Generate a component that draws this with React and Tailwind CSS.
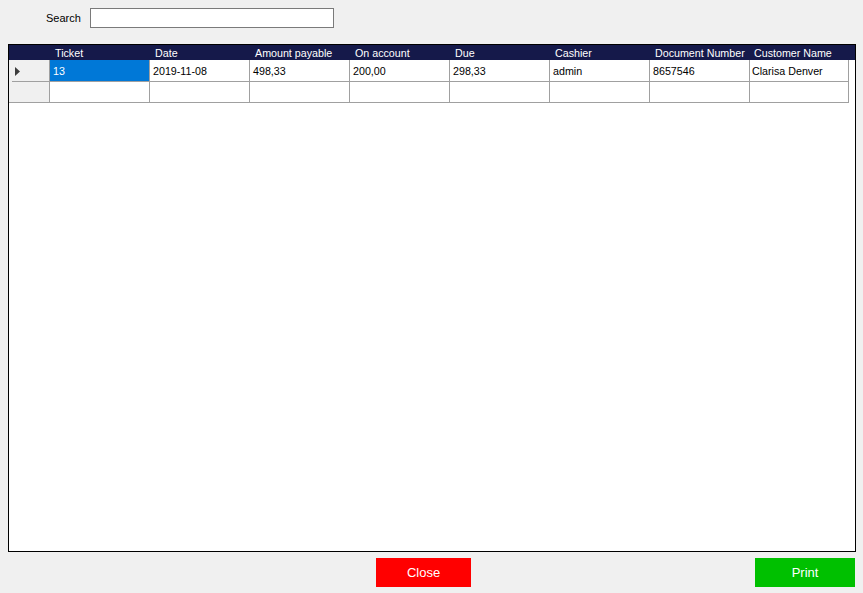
import React from 'react';

const columns = ['Ticket', 'Date', 'Amount payable', 'On account', 'Due', 'Cashier', 'Document Number', 'Customer Name'];
const rows = [
  ['13', '2019-11-08', '498,33', '200,00', '298,33', 'admin', '8657546', 'Clarisa Denver'],
  ['', '', '', '', '', '', '', ''],
];

export default function App() {
  return (
    <div className="w-[863px] h-[593px] bg-[#f0f0f0] text-[12px] text-black flex flex-col" style={{ fontFamily: '"Liberation Sans", Arial, sans-serif' }}>
      {/* search bar */}
      <div className="flex items-center h-[20px] mt-[8px] pl-[46px]">
        <span className="w-[44px] text-[11px]">Search</span>
        <div className="w-[244px] h-[20px] bg-white border border-[#7a7a7a]" />
      </div>

      {/* data grid */}
      <div className="ml-[8px] mt-[16px] w-[848px] h-[508px] bg-white border border-black flex flex-col">
        <div className="flex h-[15px] bg-[#15194a] text-white text-[10.7px] leading-[15px] pt-px">
          <div className="w-[40px] shrink-0" />
          {columns.map((c, i) => (
            <div key={c} className={`w-[100px] shrink-0 whitespace-nowrap overflow-hidden ${i === 7 ? 'pl-[5px]' : 'pl-[6px]'}`}>{c}</div>
          ))}
        </div>
        {rows.map((r, ri) => (
          <div key={ri} className={`flex ${ri === 0 ? 'h-[22px]' : 'h-[21px]'}`}>
            <div className={`w-[40px] shrink-0 bg-[#f0f0f0] relative flex items-center ${ri === 0 ? '' : 'border-b border-[#a0a0a0]'}`}>
              {ri === 0 && (
                <>
                  <svg width="6" height="9" viewBox="0 0 6 9" className="ml-[6px]">
                    <path d="M0 0 L5 4.5 L0 9 Z" fill="#3c3c3c" />
                  </svg>
                  <div className="absolute left-[3px] right-0 bottom-0 h-px bg-[#a0a0a0]" />
                </>
              )}
            </div>
            {r.map((v, ci) => (
              <div
                key={ci}
                className={`w-[100px] shrink-0 border-l border-b border-[#a0a0a0] flex items-center pt-[2px] whitespace-nowrap overflow-hidden text-[10.7px] ${ci === 7 ? 'border-r pl-[2px]' : 'pl-[3px]'} ${ri === 0 && ci === 0 ? 'bg-[#0078d7] text-white' : ''}`}
              >
                {v}
              </div>
            ))}
          </div>
        ))}
      </div>

      {/* buttons */}
      <div className="flex mt-[6px] h-[29px]">
        <button className="ml-[376px] w-[95px] h-[29px] bg-[#ff0000] text-white text-[13px]">Close</button>
        <button className="ml-[284px] w-[100px] h-[29px] bg-[#00c000] text-white text-[13px]">Print</button>
      </div>
    </div>
  );
}
